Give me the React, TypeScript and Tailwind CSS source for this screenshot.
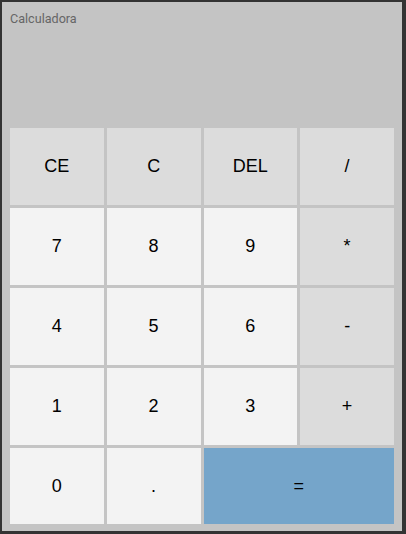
const keys: { label: string; tone: "dark" | "light" | "blue"; wide?: boolean }[] = [
  { label: "CE", tone: "dark" },
  { label: "C", tone: "dark" },
  { label: "DEL", tone: "dark" },
  { label: "/", tone: "dark" },
  { label: "7", tone: "light" },
  { label: "8", tone: "light" },
  { label: "9", tone: "light" },
  { label: "*", tone: "dark" },
  { label: "4", tone: "light" },
  { label: "5", tone: "light" },
  { label: "6", tone: "light" },
  { label: "-", tone: "dark" },
  { label: "1", tone: "light" },
  { label: "2", tone: "light" },
  { label: "3", tone: "light" },
  { label: "+", tone: "dark" },
  { label: "0", tone: "light" },
  { label: ".", tone: "light" },
  { label: "=", tone: "blue", wide: true },
];

const toneClass = {
  dark: "bg-[#dcdcdc]",
  light: "bg-[#f3f3f3]",
  blue: "bg-[#75a5ca] col-span-2",
};

export default function App() {
  return (
    <div className="h-[534px] w-[406px] border-t-2 border-l-2 border-r-4 border-b-[3px] border-[#333333] bg-[#333333]">
      <div className="flex h-full flex-col bg-[#c4c4c4] px-2 pb-[7px]">
        <div className="h-[126px] pt-[8px] text-[12.6px] text-[#666666] [font-family:Roboto,'Liberation_Sans',sans-serif]">
          Calculadora
        </div>
        <div className="grid flex-1 grid-cols-4 grid-rows-[77px_77px_77px_77px_76px] gap-[3px] [font-family:'Liberation_Sans',Arial,sans-serif]">
          {keys.map((k) => (
            <button
              key={k.label}
              className={`${toneClass[k.tone]} flex items-center justify-center text-[18px] text-black`}
            >
              {k.label}
            </button>
          ))}
        </div>
      </div>
    </div>
  );
}
